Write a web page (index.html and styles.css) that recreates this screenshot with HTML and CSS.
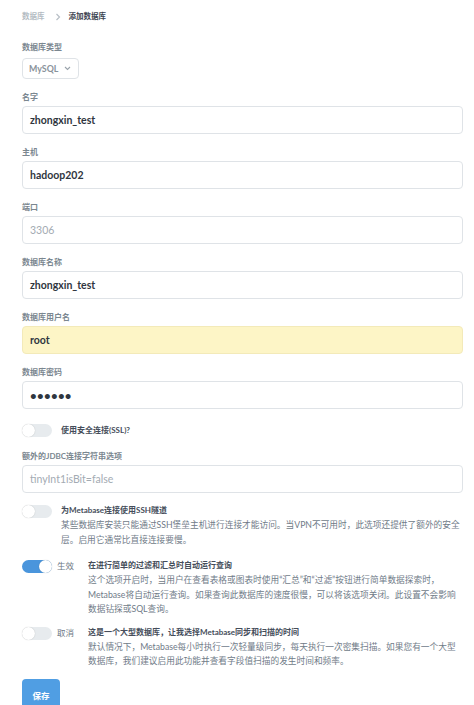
FILE: index.html
```html
<!DOCTYPE html>
<html lang="zh-CN">
<head>
<meta charset="utf-8">
<title>添加数据库</title>
<link rel="stylesheet" href="styles.css">
</head>
<body>
<div class="page">
  <div class="crumbs">
    <span class="crumb-link">数据库</span>
    <svg class="crumb-sep" width="6" height="8" viewBox="0 0 6 8"><path d="M1.5 1 L4.5 4 L1.5 7" fill="none" stroke="#b8bfc6" stroke-width="1.2"/></svg>
    <span class="crumb-current">添加数据库</span>
  </div>

  <div class="field">
    <div class="label">数据库类型</div>
    <div class="select">
      <span>MySQL</span>
      <svg width="7" height="5" viewBox="0 0 7 5"><path d="M1 1 L3.5 3.5 L6 1" fill="none" stroke="#9aa3ab" stroke-width="1.1"/></svg>
    </div>
  </div>

  <div class="field">
    <div class="label">名字</div>
    <div class="input">zhongxin_test</div>
  </div>
  <div class="field">
    <div class="label">主机</div>
    <div class="input">hadoop202</div>
  </div>
  <div class="field">
    <div class="label">端口</div>
    <div class="input placeholder">3306</div>
  </div>
  <div class="field">
    <div class="label">数据库名称</div>
    <div class="input">zhongxin_test</div>
  </div>
  <div class="field">
    <div class="label">数据库用户名</div>
    <div class="input autofill">root</div>
  </div>
  <div class="field">
    <div class="label">数据库密码</div>
    <div class="input dots">••••••</div>
  </div>

  <div class="toggle-row ssl">
    <span class="toggle"></span>
    <div class="opt">
      <div class="opt-title">使用安全连接(SSL)?</div>
    </div>
  </div>

  <div class="field jdbc">
    <div class="label">额外的JDBC连接字符串选项</div>
    <div class="input placeholder">tinyInt1isBit=false</div>
  </div>

  <div class="toggle-row ssh">
    <span class="toggle"></span>
    <div class="opt">
      <div class="opt-title">为Metabase连接使用SSH隧道</div>
      <div class="opt-desc">某些数据库安装只能通过SSH堡垒主机进行连接才能访问。当VPN不可用时，此选项还提供了额外的安全层。启用它通常比直接连接要慢。</div>
    </div>
  </div>

  <div class="toggle-row run">
    <div class="switch-group">
      <span class="toggle on"></span>
      <span class="switch-text">生效</span>
    </div>
    <div class="opt">
      <div class="opt-title">在进行简单的过滤和汇总时自动运行查询</div>
      <div class="opt-desc">这个选项开启时，当用户在查看表格或图表时使用“汇总”和“过滤”按钮进行简单数据探索时，Metabase将自动运行查询。如果查询此数据库的速度很慢，可以将该选项关闭。此设置不会影响数据钻探或SQL查询。</div>
    </div>
  </div>

  <div class="toggle-row big">
    <div class="switch-group">
      <span class="toggle"></span>
      <span class="switch-text">取消</span>
    </div>
    <div class="opt">
      <div class="opt-title">这是一个大型数据库，让我选择Metabase同步和扫描的时间</div>
      <div class="opt-desc">默认情况下，Metabase每小时执行一次轻量级同步，每天执行一次密集扫描。如果您有一个大型数据库，我们建议启用此功能并查看字段值扫描的发生时间和频率。</div>
    </div>
  </div>

  <button class="save">保存</button>
</div>
</body>
</html>
```

FILE: styles.css
```css
html, body {
  margin: 0;
  padding: 0;
  background: #ffffff;
}
body {
  font-family: "Lato", "Noto Sans CJK SC", sans-serif;
  color: #4c5773;
}
.page {
  padding: 12px 11px 0 22px;
  width: 441px;
}
.crumbs {
  display: flex;
  align-items: center;
  height: 10px;
  font-size: 7.5px;
  line-height: 10px;
  margin-bottom: 20px;
}
.crumb-link {
  color: #b4bcc3;
  font-weight: 700;
}
.crumb-sep {
  margin: 0 8px 0 10px;
}
.crumb-current {
  color: #3b4350;
  font-weight: 700;
}
.field {
  margin-bottom: 13px;
}
.label {
  font-size: 8px;
  line-height: 10px;
  height: 10px;
  font-weight: 700;
  color: #7b8790;
  margin-bottom: 4px;
}
.select {
  display: inline-flex;
  align-items: center;
  gap: 6px;
  box-sizing: border-box;
  height: 21px;
  padding: 0 7px 0 6px;
  border: 1px solid #dfe3e7;
  border-radius: 4px;
  font-size: 8.8px;
  font-weight: 700;
  color: #8a939b;
}
.input {
  box-sizing: border-box;
  height: 28px;
  border: 1px solid #dfe3e7;
  border-radius: 4px;
  padding: 0 7px;
  display: flex;
  align-items: center;
  font-size: 10.5px;
  font-weight: 700;
  color: #2f3640;
  background: #ffffff;
}
.input.placeholder {
  font-weight: 400;
  color: #a3abb3;
}
.input.autofill {
  background: #fdf5c6;
  border-color: #f3eab9;
}
.input.dots {
  font-size: 11.5px;
  letter-spacing: 0.3px;
}
.jdbc {
  margin-top: 14px;
  margin-bottom: 12px;
}
.toggle-row {
  display: flex;
  align-items: flex-start;
}
.ssl {
  margin-top: 15px;
}
.ssl .opt-title {
  line-height: 13px;
}
.run {
  margin-top: 13px;
}
.big {
  margin-top: 10px;
}
.toggle {
  position: relative;
  flex: none;
  width: 30px;
  height: 13px;
  border-radius: 7px;
  background: #e7ebee;
}
.toggle::after {
  content: "";
  position: absolute;
  left: 0;
  top: 0;
  width: 13px;
  height: 13px;
  border-radius: 50%;
  background: #ffffff;
  box-shadow: 0 0 1px rgba(0,0,0,0.25);
}
.toggle.on {
  background: #4a95dc;
}
.toggle.on::after {
  left: auto;
  right: 0;
}
.toggle-row > .toggle {
  margin-right: 9px;
}
.switch-group {
  flex: none;
  width: 66px;
  display: flex;
  align-items: center;
}
.switch-text {
  margin-left: 5px;
  font-size: 8.5px;
  line-height: 13px;
  color: #6d7784;
}
.opt {
  flex: 1;
  min-width: 0;
}
.opt-title {
  font-size: 8px;
  line-height: 10px;
  font-weight: 700;
  color: #454d5a;
}
.opt-desc {
  margin-top: 3px;
  font-size: 8.7px;
  line-height: 14.5px;
  color: #707b88;
}
.save {
  margin-top: 10px;
  width: 38px;
  height: 32px;
  border: none;
  border-radius: 4px;
  background: #509ee3;
  color: #ffffff;
  font-family: "Lato", "Noto Sans CJK SC", sans-serif;
  font-size: 8.5px;
  font-weight: 700;
  padding: 0;
}
```
